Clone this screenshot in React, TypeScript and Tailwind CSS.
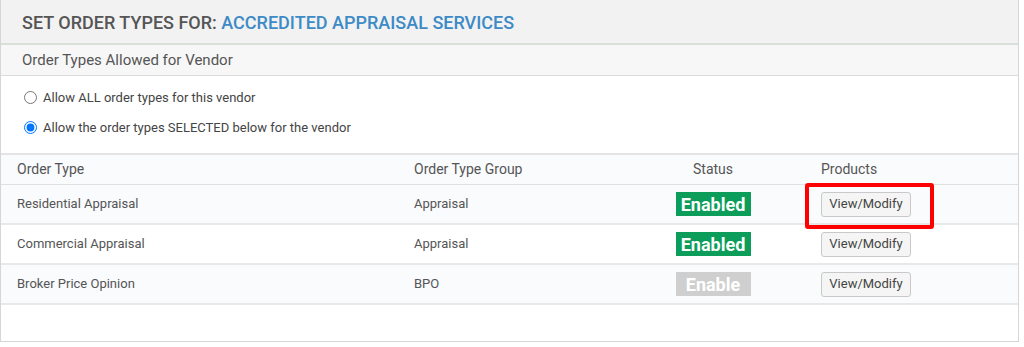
const rows = [
  { name: "Residential Appraisal", group: "Appraisal", enabled: true, highlight: true },
  { name: "Commercial Appraisal", group: "Appraisal", enabled: true, highlight: false },
  { name: "Broker Price Opinion", group: "BPO", enabled: false, highlight: false },
];

const App = () => {
  return (
    <div className="w-[1024px] h-[347px] bg-white font-['Roboto',sans-serif]">
      <div className="w-[1019px] h-[342px] border-x border-b border-[#d6d6d6] flex flex-col">
        <div className="h-[45px] shrink-0 bg-[#f2f2f2] border-b-2 border-[#d9e0d9] flex items-center pl-[21px] pt-[2px] text-[18px] font-medium text-[#555]">
          SET ORDER TYPES FOR:&nbsp;<span className="text-[#3c8ac6]">ACCREDITED APPRAISAL SERVICES</span>
        </div>
        <div className="h-[31px] shrink-0 bg-[#f7f7f7] border-b border-[#dcdcdc] flex items-center pl-[21px] text-[15px] text-[#555]">
          Order Types Allowed for Vendor
        </div>
        <div className="h-[77px] shrink-0 flex flex-col pl-[23px] pt-[15px] gap-[17px] text-[13px] text-[#444]">
          <label className="flex items-center gap-[6px] h-[13px]">
            <input type="radio" name="mode" className="w-[13px] h-[13px]" readOnly />
            Allow ALL order types for this vendor
          </label>
          <label className="flex items-center gap-[6px] h-[13px]">
            <input type="radio" name="mode" className="w-[13px] h-[13px]" defaultChecked />
            Allow the order types SELECTED below for the vendor
          </label>
        </div>
        <div className="border-t-2 border-[#e4e4e4]">
          <div className="grid grid-cols-[397px_223px_184px_1fr] h-[30px] border-b border-[#e0e0e0] bg-[#fafbfd] items-center text-[14px] text-[#555]">
            <div className="pl-4">Order Type</div>
            <div className="pl-4">Order Type Group</div>
            <div className="text-center">Status</div>
            <div className="pl-4">Products</div>
          </div>
          {rows.map((r, i) => (
            <div
              key={r.name}
              className={`grid grid-cols-[397px_223px_184px_1fr] h-[40px] border-b-2 border-[#e6e8ea] items-center text-[13px] text-[#555] ${i % 2 === 0 ? "bg-[#f9fbfd]" : "bg-white"}`}
            >
              <div className="pl-4">{r.name}</div>
              <div className="pl-4">{r.group}</div>
              <div className="flex justify-center">
                {r.enabled ? (
                  <span className="h-[24px] w-[75px] flex items-center justify-center bg-[#0c9d5a] text-white text-[18px] font-bold">
                    Enabled
                  </span>
                ) : (
                  <span className="h-[24px] w-[75px] flex items-center justify-center bg-[#cfcfcf] text-white text-[18px] font-bold">
                    Enable
                  </span>
                )}
              </div>
              <div className="relative pl-4 h-full flex items-center">
                <button className="h-[25px] w-[90px] rounded-[3px] border border-[#c9c9c9] bg-[#f5f5f5] text-[13px] text-[#444]">
                  View/Modify
                </button>
                {r.highlight && (
                  <div className="absolute left-0 top-[-2px] w-[129px] h-[46px] border-4 border-[#ff0000] rounded-[3px]" />
                )}
              </div>
            </div>
          ))}
        </div>
      </div>
    </div>
  );
};

export default App;
